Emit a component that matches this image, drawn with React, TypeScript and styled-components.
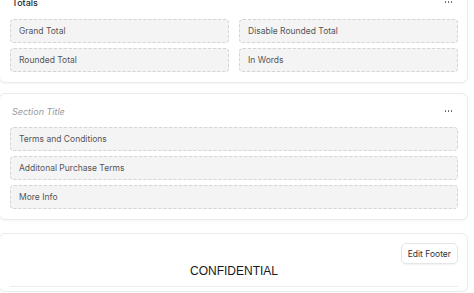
import React from "react";
import styled, { createGlobalStyle } from "styled-components";

const Global = createGlobalStyle`
  html, body { margin: 0; padding: 0; background: #ffffff; }
  body { font-family: Inter, "Noto Sans", sans-serif; overflow: hidden; }
`;

const Page = styled.div`
  display: flex;
  flex-direction: column;
  gap: 10px;
  margin-top: -16px;
  margin-left: -1px;
  padding-right: 6px;
`;

const Card = styled.div<{ $gapTop?: number }>`
  border: 1px solid #ebebeb;
  border-radius: 6px;
  background: #fff;
  box-shadow: 0 1px 2px rgba(0, 0, 0, 0.04);
  padding: 9px 9px 10px 10px;
  margin-top: ${(p) => p.$gapTop ?? 0}px;
`;

const Header = styled.div<{ $mb?: number }>`
  display: flex;
  align-items: center;
  justify-content: space-between;
  height: 16px;
  margin-bottom: ${(p) => p.$mb ?? 8}px;
  padding: 0 2px;
`;

const Title = styled.div<{ $placeholder?: boolean }>`
  font-size: 9px;
  color: ${(p) => (p.$placeholder ? "#9a9a9a" : "#1f1f1f")};
  font-style: ${(p) => (p.$placeholder ? "italic" : "normal")};
  font-weight: ${(p) => (p.$placeholder ? 400 : 500)};
`;

const Dots = styled.span`
  display: inline-flex;
  gap: 1.5px;
  margin-right: 4px;
  span {
    width: 1.5px;
    height: 1.5px;
    border-radius: 50%;
    background: #555;
  }
`;

const Grid = styled.div<{ $cols: number }>`
  display: grid;
  grid-template-columns: repeat(${(p) => p.$cols}, 1fr);
  column-gap: 10px;
  row-gap: 5px;
`;

const Field = styled.div`
  height: 24px;
  box-sizing: border-box;
  background: #f4f4f5;
  border: 1px dashed #d4d4d6;
  border-radius: 4px;
  display: flex;
  align-items: center;
  padding-left: 8px;
  font-size: 8.5px;
  color: #555;
`;

const FooterCard = styled(Card)`
  padding: 9px 9px 4px 10px;
`;

const FooterTop = styled.div`
  display: flex;
  justify-content: flex-end;
`;

const Button = styled.button`
  font-family: Inter, "Noto Sans", sans-serif;
  font-size: 8.5px;
  color: #333;
  background: #fff;
  border: 1px solid #e6e6e6;
  border-radius: 5px;
  box-shadow: 0 1px 2px rgba(0, 0, 0, 0.06);
  height: 21px;
  padding: 0 6px;
`;

const Confidential = styled.div`
  text-align: center;
  font-family: "Liberation Sans", Arial, sans-serif;
  font-size: 12px;
  color: #1a1a1a;
  margin-top: 0;
  padding-bottom: 8px;
  border-bottom: 1px solid #ececec;
`;

const MoreDots = () => (
  <Dots>
    <span />
    <span />
    <span />
  </Dots>
);

export default function App() {
  return (
    <>
      <Global />
      <Page>
        <Card>
          <Header $mb={9}>
            <Title>Totals</Title>
            <MoreDots />
          </Header>
          <Grid $cols={2}>
            <Field>Grand Total</Field>
            <Field>Disable Rounded Total</Field>
            <Field>Rounded Total</Field>
            <Field>In Words</Field>
          </Grid>
        </Card>
        <Card>
          <Header>
            <Title $placeholder>Section Title</Title>
            <MoreDots />
          </Header>
          <Grid $cols={1}>
            <Field>Terms and Conditions</Field>
            <Field>Additonal Purchase Terms</Field>
            <Field>More Info</Field>
          </Grid>
        </Card>
        <FooterCard $gapTop={3}>
          <FooterTop>
            <Button>Edit Footer</Button>
          </FooterTop>
          <Confidential>CONFIDENTIAL</Confidential>
        </FooterCard>
      </Page>
    </>
  );
}
